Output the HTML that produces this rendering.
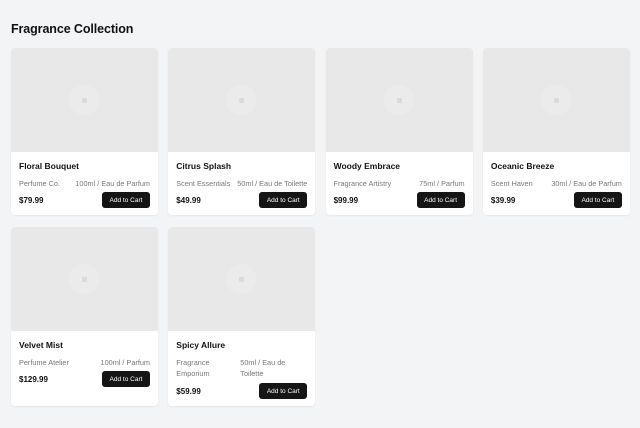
<!DOCTYPE html>
<html><head><style>
*{box-sizing:border-box;margin:0;padding:0}
body{width:640px;height:428px;background:#f3f4f6;font-family:"Liberation Sans",sans-serif;color:#111;position:relative;overflow:hidden}
h1{position:absolute;left:11px;top:22px;font-size:12.5px;font-weight:bold;letter-spacing:-0.1px}
.grid{position:absolute;left:11px;top:48px;display:grid;grid-template-columns:repeat(4,147px);column-gap:10.3px;row-gap:12px}
.card{background:#fff;border-radius:4px;overflow:hidden;box-shadow:0 1px 2px rgba(0,0,0,.06);display:flex;flex-direction:column}
.img{height:104px;background:#e8e8e8;position:relative}
.img:before{content:"";position:absolute;left:58px;top:37px;width:30px;height:30px;border-radius:50%;background:#ebebeb}
.img:after{content:"";position:absolute;left:71px;top:50px;width:5px;height:5px;border-radius:1px;background:#dadada}
.body{padding:9px 8px 7px;flex:1;display:flex;flex-direction:column}
.name{font-size:8.5px;font-weight:bold;margin-bottom:7px}
.meta{display:flex;justify-content:space-between;font-size:7.3px;color:#777;line-height:11px;margin-bottom:3px;white-space:nowrap}
.meta.w{white-space:normal;justify-content:flex-start;margin-bottom:4px}
.meta.w span:first-child{width:64px}
.meta.w span:last-child{width:64px}
.foot{display:flex;justify-content:space-between;align-items:center;margin-top:auto}
.price{font-size:8px;font-weight:bold}
.btn{background:#151515;color:#fff;font-size:6.5px;border-radius:3px;width:48px;height:16px;display:flex;align-items:center;justify-content:center}
</style></head><body>
<h1>Fragrance Collection</h1>
<div class="grid">
<div class="card"><div class="img"></div><div class="body"><div class="name">Floral Bouquet</div><div class="meta"><span>Perfume Co.</span><span>100ml / Eau de Parfum</span></div><div class="foot"><span class="price">$79.99</span><span class="btn">Add to Cart</span></div></div></div>
<div class="card"><div class="img"></div><div class="body"><div class="name">Citrus Splash</div><div class="meta"><span>Scent Essentials</span><span>50ml / Eau de Toilette</span></div><div class="foot"><span class="price">$49.99</span><span class="btn">Add to Cart</span></div></div></div>
<div class="card"><div class="img"></div><div class="body"><div class="name">Woody Embrace</div><div class="meta"><span>Fragrance Artistry</span><span>75ml / Parfum</span></div><div class="foot"><span class="price">$99.99</span><span class="btn">Add to Cart</span></div></div></div>
<div class="card"><div class="img"></div><div class="body"><div class="name">Oceanic Breeze</div><div class="meta"><span>Scent Haven</span><span>30ml / Eau de Parfum</span></div><div class="foot"><span class="price">$39.99</span><span class="btn">Add to Cart</span></div></div></div>
<div class="card"><div class="img"></div><div class="body"><div class="name">Velvet Mist</div><div class="meta"><span>Perfume Atelier</span><span>100ml / Parfum</span></div><div class="foot" style="margin-top:0"><span class="price">$129.99</span><span class="btn">Add to Cart</span></div></div></div>
<div class="card"><div class="img"></div><div class="body"><div class="name">Spicy Allure</div><div class="meta w"><span>Fragrance Emporium</span><span>50ml / Eau de Toilette</span></div><div class="foot"><span class="price">$59.99</span><span class="btn">Add to Cart</span></div></div></div>
</div>
</body></html>
